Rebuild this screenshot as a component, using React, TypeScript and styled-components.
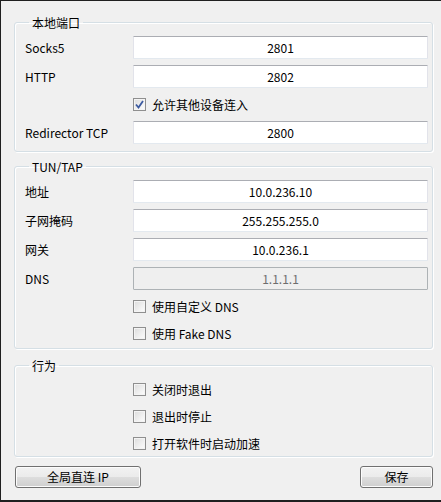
import React from "react";
import styled, { createGlobalStyle } from "styled-components";

const Global = createGlobalStyle`
  html, body {
    margin: 0;
    padding: 0;
    background: #f0f0f0;
  }
  body {
    font-family: "Noto Sans CJK SC", "Liberation Sans", sans-serif;
    font-size: 12px;
    color: #000;
  }
`;

const Window = styled.div`
  width: 441px;
  height: 502px;
  box-sizing: border-box;
  border-top: 1px solid #1f1f1f;
  border-left: 1px solid #1f1f1f;
  border-bottom: 2px solid #1f1f1f;
  background: #f0f0f0;
  padding: 13px 8px 0 13px;
  display: flex;
  flex-direction: column;
`;

const Group = styled.fieldset<{ gapTop?: number; padBottom: number }>`
  margin: ${(p) => p.gapTop ?? 0}px 0 0 0;
  padding: 5px 4px ${(p) => p.padBottom}px 10px;
  border: 1px solid #d5dfe5;
  border-radius: 3px;
  box-shadow: inset 1px 1px 0 #fff, 1px 1px 0 #fff;
  min-width: 0;
`;

const Title = styled.legend`
  margin-left: 4px;
  padding: 0 3px;
  line-height: 17px;
  height: 17px;
`;

const Rows = styled.div`
  display: grid;
  grid-template-columns: 108px 1fr;
  row-gap: 6px;
  align-items: center;
`;

const Label = styled.span`
  grid-column: 1;
  line-height: 23px;
`;

const Field = styled.div<{ disabled?: boolean }>`
  grid-column: 2;
  height: 23px;
  box-sizing: border-box;
  border: 1px solid ${(p) => (p.disabled ? "#adb2b5" : "#e2e3ea")};
  border-top-color: ${(p) => (p.disabled ? "#adb2b5" : "#abadb3")};
  border-bottom-color: ${(p) => (p.disabled ? "#adb2b5" : "#e3e9ef")};
  border-radius: 1px;
  background: ${(p) => (p.disabled ? "#efefef" : "#fff")};
  color: ${(p) => (p.disabled ? "#6d6d6d" : "#000")};
  display: flex;
  align-items: center;
  justify-content: center;
  line-height: 21px;
`;

const CheckRow = styled.label`
  grid-column: 2;
  height: 21px;
  display: flex;
  align-items: center;
  gap: 6px;
  white-space: nowrap;
`;

const Box = styled.span`
  width: 13px;
  height: 13px;
  box-sizing: border-box;
  border: 1px solid #8f8f8f;
  background: linear-gradient(135deg, #dcdcdc 0%, #f4f4f4 70%, #fdfdfd 100%);
  box-shadow: inset 0 0 0 1px #f4f4f4;
  display: flex;
  align-items: center;
  justify-content: center;
  flex: none;
`;

const Footer = styled.div`
  margin-top: 9px;
  display: flex;
  justify-content: space-between;
  padding-left: 1px;
`;

const Button = styled.button<{ w: number }>`
  width: ${(p) => p.w}px;
  height: 22px;
  box-sizing: border-box;
  border: 1px solid #707070;
  border-radius: 3px;
  background: linear-gradient(#f2f2f2 0%, #ebebeb 50%, #dddddd 51%, #cfcfcf 100%);
  box-shadow: inset 0 0 0 1px #fcfcfc;
  font: inherit;
  color: #000;
  padding: 0;
  line-height: 18px;
`;

const Check = ({ on, text }: { on?: boolean; text: string }) => (
  <CheckRow>
    <Box>
      {on && (
        <svg width="9" height="9" viewBox="0 0 9 9">
          <path d="M1 4.5 L3.5 7.5 L8 1" fill="none" stroke="#3c5aa0" strokeWidth="1.8" />
        </svg>
      )}
    </Box>
    {text}
  </CheckRow>
);

export default function App() {
  return (
    <Window>
      <Global />
      <Group padBottom={7}>
        <Title>本地端口</Title>
        <Rows>
          <Label>Socks5</Label>
          <Field>2801</Field>
          <Label>HTTP</Label>
          <Field>2802</Field>
          <Check on text="允许其他设备连入" />
          <Label>Redirector TCP</Label>
          <Field>2800</Field>
        </Rows>
      </Group>
      <Group gapTop={6} padBottom={4}>
        <Title>TUN/TAP</Title>
        <Rows>
          <Label>地址</Label>
          <Field>10.0.236.10</Field>
          <Label>子网掩码</Label>
          <Field>255.255.255.0</Field>
          <Label>网关</Label>
          <Field>10.0.236.1</Field>
          <Label>DNS</Label>
          <Field disabled>1.1.1.1</Field>
          <Check text="使用自定义 DNS" />
          <Check text="使用 Fake DNS" />
        </Rows>
      </Group>
      <Group gapTop={8} padBottom={2}>
        <Title>行为</Title>
        <Rows>
          <Check text="关闭时退出" />
          <Check text="退出时停止" />
          <Check text="打开软件时启动加速" />
        </Rows>
      </Group>
      <Footer>
        <Button w={126}>全局直连 IP</Button>
        <Button w={73}>保存</Button>
      </Footer>
    </Window>
  );
}
